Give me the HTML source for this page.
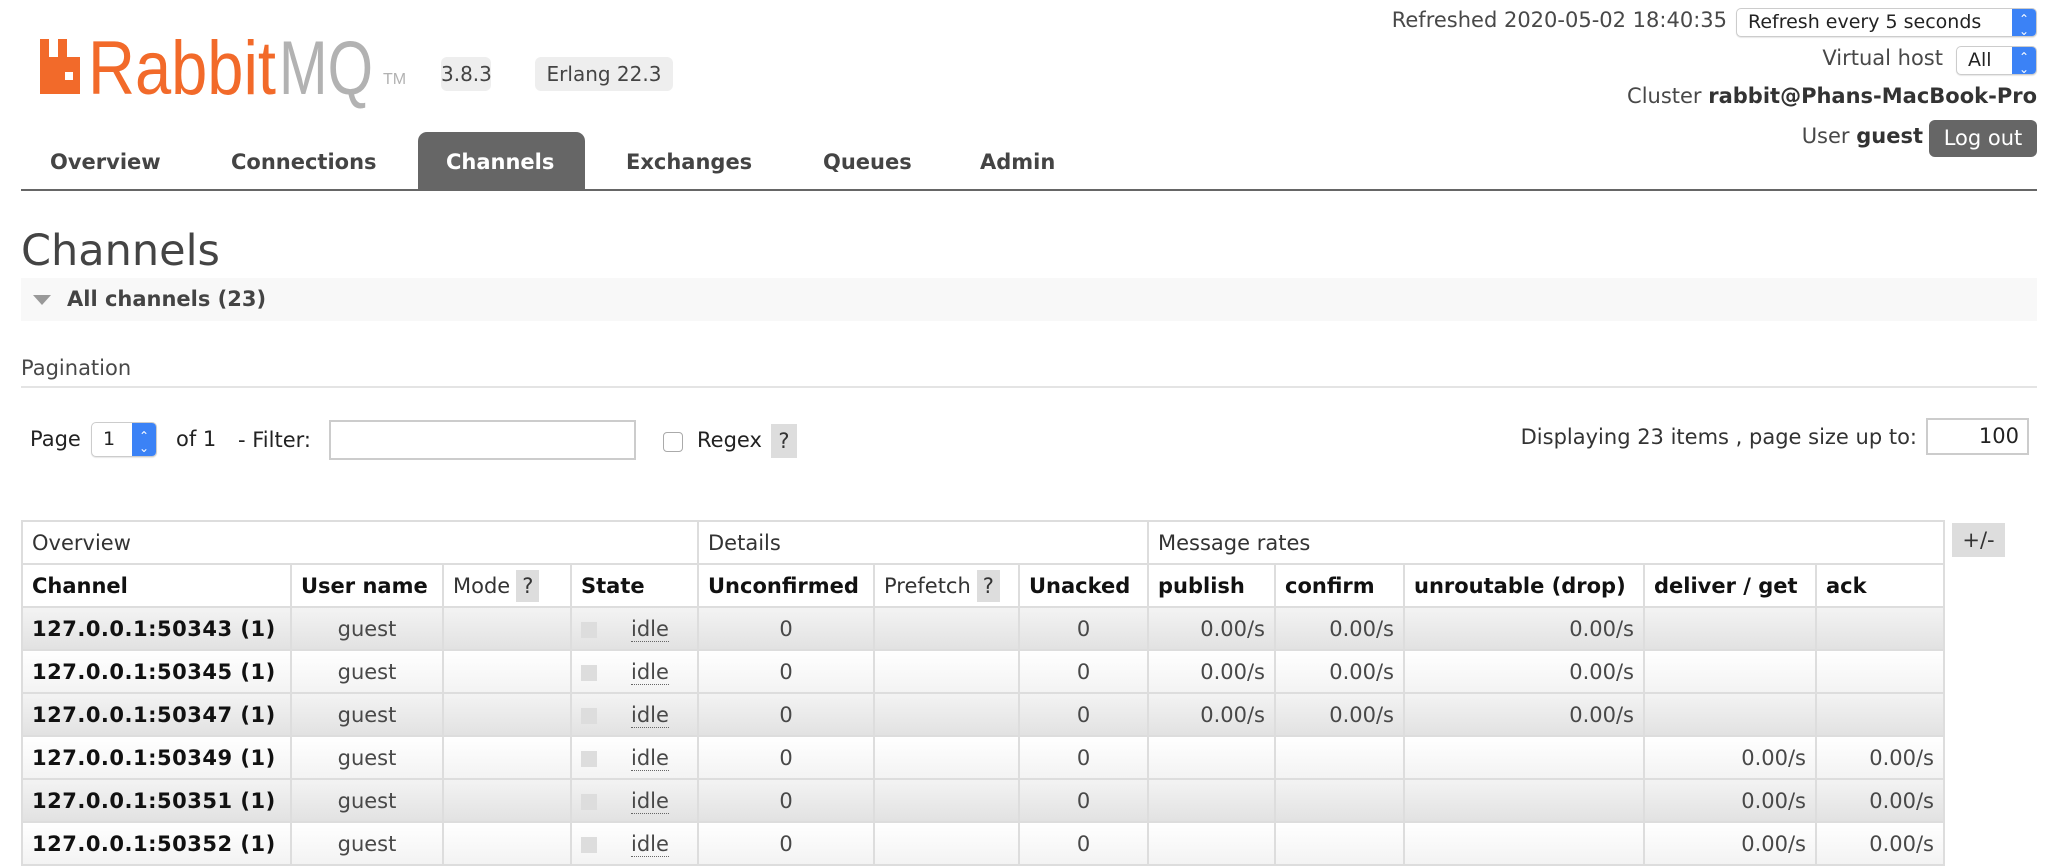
<!DOCTYPE html>
<html><head><meta charset="utf-8"><style>
*{box-sizing:border-box}
body{margin:0;width:2048px;height:867px;overflow:hidden;background:#fff;font-family:"DejaVu Sans",Verdana,sans-serif;color:#484848;font-size:21px;position:relative}
.abs{position:absolute;white-space:nowrap}
.badge{position:absolute;background:#eee;border-radius:6px;font-size:20px;color:#444;text-align:center;line-height:34px;height:34px;top:57px}
.nav{position:absolute;top:150px;font-weight:bold;font-size:21px;color:#444}
.sel{position:absolute;border:1px solid #ccc;border-radius:5px;background:#fff;font-size:19px;color:#222;box-shadow:0 1px 1px rgba(0,0,0,.1)}
.sel .arr{position:absolute;right:0;top:0;bottom:0;width:24px;background:#3b82f6;border-radius:0 4px 4px 0;color:#fff;font-size:12px;text-align:center;line-height:1}
table{position:absolute;left:21px;top:520px;border-collapse:collapse;table-layout:fixed;font-size:21px}
td,th{border:2px solid #ddd;height:43px;padding:0 9px;white-space:nowrap;overflow:hidden}
th{text-align:left;font-weight:bold;color:#111}
th.n{font-weight:normal;color:#333}
tr.g th{font-weight:normal;color:#333}
tr.o td{background:linear-gradient(#f3f3f3,#e2e2e2)}
tr.e td{background:linear-gradient(#fff,#f3f3f3)}
td.c{text-align:center}td.r{text-align:right}
td.ch{font-weight:bold;color:#111;letter-spacing:0.5px}
.q{display:inline-block;background:#ddd;padding:0 6px;margin-left:6px;line-height:32px}
.sq{display:inline-block;width:16px;height:16px;background:#ddd;vertical-align:middle;margin-right:34px}
.idle{border-bottom:1px dotted #666}
</style></head><body>
<svg class="abs" style="left:0;top:0" width="430" height="110">
<path d="M40 39h9v18h9v-18h9v18h13v37h-40z" fill="#f26a2a"/>
<rect x="65" y="72" width="8" height="8" fill="#fff"/>
<text x="88" y="94" font-family="Liberation Sans" font-size="76" fill="#f26a2a" textLength="188" lengthAdjust="spacingAndGlyphs">Rabbit</text>
<text x="279" y="94" font-family="Liberation Sans" font-size="76" fill="#b2b2b2" textLength="94" lengthAdjust="spacingAndGlyphs">MQ</text>
<text x="383" y="84" font-family="Liberation Sans" font-size="16" fill="#b2b2b2">TM</text>
</svg>
<div class="badge" style="left:441px;width:50px">3.8.3</div>
<div class="badge" style="left:535px;width:138px">Erlang 22.3</div>

<div class="abs" style="right:321px;top:8px">Refreshed 2020-05-02 18:40:35</div>
<div class="sel" style="left:1736px;top:8px;width:301px;height:29px;line-height:27px;padding-left:11px">Refresh every 5 seconds<div class="arr" style="padding-top:4px">⌃<br>⌄</div></div>
<div class="abs" style="right:105px;top:46px">Virtual host</div>
<div class="sel" style="left:1956px;top:46px;width:81px;height:29px;line-height:27px;padding-left:11px">All<div class="arr" style="padding-top:4px">⌃<br>⌄</div></div>
<div class="abs" style="right:11px;top:84px">Cluster <b style="color:#333">rabbit@Phans-MacBook-Pro</b></div>
<div class="abs" style="right:125px;top:124px">User <b style="color:#333">guest</b></div>
<div class="abs" style="left:1929px;top:120px;width:108px;height:37px;background:#666;color:#fff;border-radius:6px;text-align:center;line-height:37px;font-size:21px">Log out</div>

<div class="abs" style="left:418px;top:132px;width:167px;height:58px;background:#666;border-radius:9px 9px 0 0"></div>
<div class="nav" style="left:50px">Overview</div>
<div class="nav" style="left:231px">Connections</div>
<div class="nav" style="left:446px;color:#fff">Channels</div>
<div class="nav" style="left:626px">Exchanges</div>
<div class="nav" style="left:823px">Queues</div>
<div class="nav" style="left:980px">Admin</div>
<div class="abs" style="left:21px;top:189px;width:2016px;height:2px;background:#666"></div>

<div class="abs" style="left:21px;top:226px;font-size:43px;color:#444">Channels</div>
<div class="abs" style="left:21px;top:278px;width:2016px;height:43px;background:#f8f8f8"></div>
<div class="abs" style="left:33px;top:295px;width:0;height:0;border-left:9px solid transparent;border-right:9px solid transparent;border-top:10px solid #999"></div>
<div class="abs" style="left:67px;top:287px;font-weight:bold;font-size:21px;color:#444">All channels (23)</div>

<div class="abs" style="left:21px;top:356px">Pagination</div>
<div class="abs" style="left:21px;top:386px;width:2016px;height:2px;background:#e4e4e4"></div>

<div class="abs" style="left:30px;top:427px;color:#222">Page</div>
<div class="sel" style="left:91px;top:422px;width:66px;height:35px;line-height:33px;padding-left:11px">1<div class="arr" style="padding-top:7px">⌃<br>⌄</div></div>
<div class="abs" style="left:176px;top:427px;color:#222">of 1</div>
<div class="abs" style="left:238px;top:428px;color:#222">- Filter:</div>
<div class="abs" style="left:329px;top:420px;width:307px;height:40px;border:2px solid #ccc"></div>
<div class="abs" style="left:663px;top:432px;width:20px;height:20px;border:1px solid #aaa;border-radius:4px"></div>
<div class="abs" style="left:697px;top:428px;color:#222">Regex</div>
<div class="abs" style="left:771px;top:424px;width:26px;height:34px;background:#ddd;text-align:center;line-height:34px;color:#333">?</div>
<div class="abs" style="right:131px;top:425px;color:#333">Displaying 23 items , page size up to:</div>
<div class="abs" style="left:1926px;top:418px;width:103px;height:37px;border:2px solid #ccc;text-align:right;padding-right:8px;line-height:33px;color:#222">100</div>

<div class="abs" style="left:1952px;top:523px;width:53px;height:34px;background:#ddd;text-align:center;line-height:34px;color:#333">+/-</div>

<table>
<colgroup><col style="width:269px"><col style="width:152px"><col style="width:128px"><col style="width:127px"><col style="width:176px"><col style="width:145px"><col style="width:129px"><col style="width:127px"><col style="width:129px"><col style="width:240px"><col style="width:172px"><col style="width:128px"></colgroup>
<tr class="g"><th colspan="4">Overview</th><th colspan="3">Details</th><th colspan="5">Message rates</th></tr>
<tr><th>Channel</th><th>User name</th><th class="n">Mode<span class="q">?</span></th><th>State</th><th>Unconfirmed</th><th class="n">Prefetch<span class="q">?</span></th><th>Unacked</th><th>publish</th><th>confirm</th><th>unroutable (drop)</th><th>deliver / get</th><th>ack</th></tr>
<tr class="o"><td class="ch">127.0.0.1:50343 (1)</td><td class="c">guest</td><td></td><td><span class="sq"></span><span class="idle">idle</span></td><td class="c">0</td><td></td><td class="c">0</td><td class="r">0.00/s</td><td class="r">0.00/s</td><td class="r">0.00/s</td><td></td><td></td></tr>
<tr class="e"><td class="ch">127.0.0.1:50345 (1)</td><td class="c">guest</td><td></td><td><span class="sq"></span><span class="idle">idle</span></td><td class="c">0</td><td></td><td class="c">0</td><td class="r">0.00/s</td><td class="r">0.00/s</td><td class="r">0.00/s</td><td></td><td></td></tr>
<tr class="o"><td class="ch">127.0.0.1:50347 (1)</td><td class="c">guest</td><td></td><td><span class="sq"></span><span class="idle">idle</span></td><td class="c">0</td><td></td><td class="c">0</td><td class="r">0.00/s</td><td class="r">0.00/s</td><td class="r">0.00/s</td><td></td><td></td></tr>
<tr class="e"><td class="ch">127.0.0.1:50349 (1)</td><td class="c">guest</td><td></td><td><span class="sq"></span><span class="idle">idle</span></td><td class="c">0</td><td></td><td class="c">0</td><td></td><td></td><td></td><td class="r">0.00/s</td><td class="r">0.00/s</td></tr>
<tr class="o"><td class="ch">127.0.0.1:50351 (1)</td><td class="c">guest</td><td></td><td><span class="sq"></span><span class="idle">idle</span></td><td class="c">0</td><td></td><td class="c">0</td><td></td><td></td><td></td><td class="r">0.00/s</td><td class="r">0.00/s</td></tr>
<tr class="e"><td class="ch">127.0.0.1:50352 (1)</td><td class="c">guest</td><td></td><td><span class="sq"></span><span class="idle">idle</span></td><td class="c">0</td><td></td><td class="c">0</td><td></td><td></td><td></td><td class="r">0.00/s</td><td class="r">0.00/s</td></tr>
</table>
</body></html>
